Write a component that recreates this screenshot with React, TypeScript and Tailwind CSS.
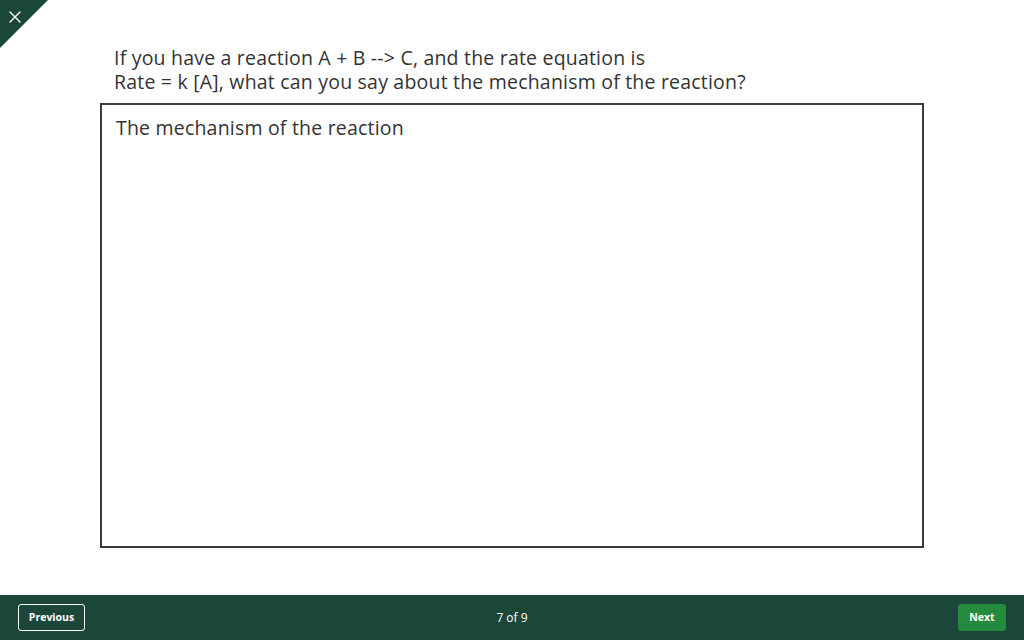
import React from 'react';

const App = () => {
  return (
    <div
      className="w-[1024px] h-[640px] flex flex-col bg-white text-[#333333] overflow-hidden"
      style={{ fontFamily: '"Open Sans", Lato, sans-serif' }}
    >
      {/* Main */}
      <div className="relative flex-1 flex flex-col pl-[100px] pr-[100px] pt-[46px]">
        {/* Close corner */}
        <div className="absolute left-0 top-0 w-[48px] h-[48px]">
          <svg width="48" height="48" viewBox="0 0 48 48" className="absolute left-0 top-0">
            <polygon points="0,0 48,0 0,48" fill="#1b473b" />
          </svg>
          <svg width="12" height="12" viewBox="0 0 12 12" className="absolute left-[9px] top-[11px]">
            <path d="M1 1L11 11M11 1L1 11" stroke="white" strokeWidth="1.4" strokeLinecap="round" />
          </svg>
        </div>

        <div className="pl-[14px] text-[19.5px] leading-[24px] tracking-[0.2px] text-[#333333]">
          <p>If you have a reaction A + B --&gt; C, and the rate equation is</p>
          <p>Rate = k [A], what can you say about the mechanism of the reaction?</p>
        </div>

        <div className="mt-[9px] w-[824px] h-[445px] border-2 border-[#3a3a3a] px-[14px] pt-[10px] text-[19.5px] leading-[26px] tracking-[0.2px] text-[#333333]">
          The mechanism of the reaction
        </div>
      </div>

      {/* Footer */}
      <div className="h-[45px] bg-[#1b473b] flex items-center justify-between px-[18px] relative">
        <button className="h-[27px] w-[67px] border border-white rounded-[3px] text-white text-[10.5px] font-bold">
          Previous
        </button>
        <div className="absolute left-1/2 -translate-x-1/2 text-white text-[12px]">7 of 9</div>
        <button className="h-[27px] w-[48px] bg-[#238a3e] rounded-[3px] text-white text-[10.5px] font-bold">
          Next
        </button>
      </div>
    </div>
  );
};

export default App;
